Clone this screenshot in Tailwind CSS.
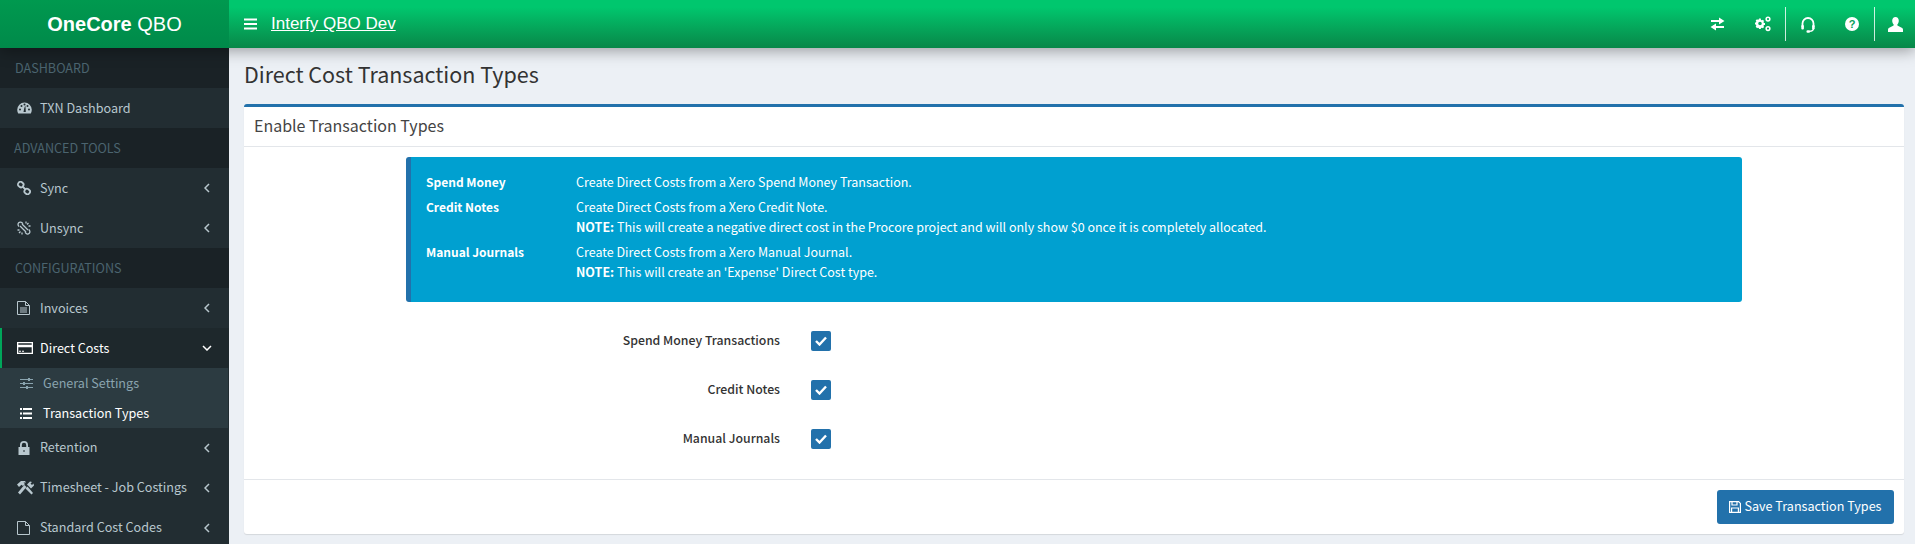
<!DOCTYPE html>
<html lang="en">
<head>
  <meta charset="UTF-8">
  <title>OneCore QBO - Transaction Types</title>
  <script src="https://cdn.jsdelivr.net/npm/@tailwindcss/browser@4"></script>
</head>
<body class="h-[544px] w-[1915px] overflow-hidden bg-[#ecf0f5] font-['Noto_Sans_CJK_SC','Noto_Sans',sans-serif] text-[12.6px] text-[#333]">
  <!-- Header -->
  <header class="relative z-10 flex h-12 bg-gradient-to-b from-[#00c76e] from-15% to-[#078748] text-white shadow-[0_3px_14px_rgba(0,0,0,0.35)]">
    <a class="flex w-[229px] items-center justify-center bg-gradient-to-b from-[#00994f] to-[#008a4a] font-['Liberation_Sans',sans-serif] text-[20px]"><b>OneCore</b>&nbsp;QBO</a>
    <div class="flex flex-1 items-center">
      <svg class="ml-[15px] h-[14px] w-[13px]" viewBox="0 0 13 14" fill="#fff"><rect y="1.500" width="13" height="2"/><rect y="6" width="13" height="2"/><rect y="10.500" width="13" height="2"/></svg>
      <a class="ml-[14px] font-['Liberation_Sans',sans-serif] text-[17px] underline">Interfy QBO Dev</a>
    </div>
    <div class="flex items-center">
      <div class="flex h-12 w-[44px] items-center justify-center pr-[3px]">
        <svg class="h-[14px] w-[15px]" viewBox="0 0 15 14" fill="#fff"><path d="M1 3h8V0.500L14.500 4 9 7.500V5H1zM14 9H6V6.500L0.500 10 6 13.500V11h8z"/></svg>
      </div>
      <div class="flex h-12 w-[44px] items-center justify-center">
        <svg class="h-[16px] w-[16px]" viewBox="0 0 16 15" fill="#fff"><path fill-rule="evenodd" d="M6 3.500l1 .3.8-.6 1.300 1.300-.6.9.4 1 1.100.2v1.800l-1.100.2-.4 1 .6.9-1.300 1.300-.8-.6-1 .4-.2 1H4l-.2-1-1-.4-.8.6L.7 10l.6-.9-.4-1L0 7.900V6.100l.9-.2.4-1-.6-.9L2 2.700l.8.6 1-.3.200-1h1.800zM5 5.200a1.800 1.800 0 100 3.600 1.800 1.800 0 000-3.600z"/><path fill-rule="evenodd" d="M13 0a2.600 2.600 0 110 5.200A2.600 2.600 0 0113 0zm0 1.500a1.100 1.100 0 100 2.200 1.100 1.100 0 000-2.200zM13 9.500a2.600 2.600 0 110 5.200 2.600 2.600 0 010-5.200zm0 1.500a1.100 1.100 0 100 2.200 1.100 1.100 0 000-2.200z"/></svg>
      </div>
      <div class="h-[34px] w-px bg-white/80"></div>
      <div class="flex h-12 w-[44px] items-center justify-center">
        <svg class="mt-[2px] h-[16px] w-[14px]" viewBox="0 0 14 16" fill="none" stroke="#fff" stroke-width="1.800"><path d="M1.500 10V6.500a5.500 5.500 0 0111 0V10"/><path d="M12.500 11c0 2-1.500 3.300-4 3.300" stroke-width="1.400"/><rect x="0.300" y="8" width="2.600" height="4.500" rx="1" fill="#fff" stroke="none"/><rect x="11.100" y="8" width="2.600" height="4.500" rx="1" fill="#fff" stroke="none"/><rect x="5.500" y="13.300" width="3.500" height="2.400" rx="1" fill="#fff" stroke="none"/></svg>
      </div>
      <div class="flex h-12 w-[44px] items-center justify-center">
        <span class="flex h-[14px] w-[14px] items-center justify-center rounded-full bg-white font-['Liberation_Sans',sans-serif] text-[11px] font-bold leading-none text-[#06a05a]">?</span>
      </div>
      <div class="h-[34px] w-px bg-white/80"></div>
      <div class="flex h-12 w-[40px] items-center justify-center">
        <svg class="h-[15px] w-[15px]" viewBox="0 0 15 15" fill="#fff"><path d="M7.500 0C5.500 0 4.200 1.500 4.200 3.700c0 1.500.6 2.800 1.400 3.600v1.300L.8 11C.2 11.400 0 12 0 12.800V15h15v-2.200c0-.8-.2-1.400-.8-1.800L9.400 8.600V7.300c.8-.8 1.400-2.100 1.400-3.600C10.800 1.500 9.500 0 7.500 0z"/></svg>
      </div>
    </div>
  </header>

  <div class="flex h-[496px]">
    <!-- Sidebar -->
    <aside class="w-[229px] shrink-0 overflow-hidden bg-[#222d32] leading-5 text-[#b8c7ce]">
      <div class="flex h-10 items-center bg-[#1a2226] pb-px pl-[15px] text-[#4b646f]">DASHBOARD</div>
      <a class="flex h-10 items-center pl-[17px]">
        <svg class="h-[14px] w-[15px]" viewBox="0 0 15 14" fill="#b8c7ce"><path fill-rule="evenodd" d="M7.500 1.500a7.300 7.300 0 00-7.300 7.300c0 1.400.4 2.700 1 3.700h12.600c.6-1 1-2.300 1-3.700a7.300 7.300 0 00-7.300-7.300zM3 9.500a1 1 0 110-2 1 1 0 010 2zm1.500-3.600a1 1 0 110-2 1 1 0 010 2zm3-1.400a1 1 0 110-2 1 1 0 010 2zM8.800 11H6.500l.8-4 1-2.500.3 2.600zM12 9.500a1 1 0 110-2 1 1 0 010 2zm-1.500-3.600a1 1 0 110-2 1 1 0 010 2z"/></svg>
        <span class="mb-px ml-2">TXN Dashboard</span>
      </a>
      <div class="flex h-10 items-center bg-[#1a2226] pb-px pl-[14px] text-[#4b646f]">ADVANCED TOOLS</div>
      <a class="flex h-10 items-center pl-[17px]">
        <svg class="h-[14px] w-[14px]" viewBox="0 0 14 14" fill="none" stroke="#b8c7ce" stroke-width="1.800"><rect x="1" y="1" width="5.500" height="5" rx="2.200" transform="rotate(40 3.700 3.500)"/><rect x="7.500" y="8" width="5.500" height="5" rx="2.200" transform="rotate(40 10.200 10.500)"/><path d="M5.500 5.500l3 3"/></svg>
        <span class="mb-px ml-[9px]">Sync</span>
        <svg class="ml-auto mr-[19px] h-[10px] w-[6px]" viewBox="0 0 6 10" fill="none" stroke="#b8c7ce" stroke-width="1.500"><path d="M5 1L1 5l4 4"/></svg>
      </a>
      <a class="flex h-10 items-center pl-[17px]">
        <svg class="h-[14px] w-[14px]" viewBox="0 0 14 14" fill="none" stroke="#b8c7ce" stroke-width="1.300"><path d="M2 5.500C.5 4 1 2.500 1.700 1.800S4 .7 5 1.700l1 1M8 11.300l1 1c1 1 2.500.7 3.300 0s1-2.300-.5-3.800M3 5l6 6M5 3l6 6M9 .5v2M13.500 5h-2M11.500 2l-1.500 1.500M.5 9h2M5 13.500v-2M2 12l1.500-1.500"/></svg>
        <span class="mb-px ml-[9px]">Unsync</span>
        <svg class="ml-auto mr-[19px] h-[10px] w-[6px]" viewBox="0 0 6 10" fill="none" stroke="#b8c7ce" stroke-width="1.500"><path d="M5 1L1 5l4 4"/></svg>
      </a>
      <div class="flex h-10 items-center bg-[#1a2226] pb-px pl-[15px] text-[#4b646f]">CONFIGURATIONS</div>
      <a class="flex h-10 items-center pl-[17px]">
        <svg class="h-[14px] w-[13px]" viewBox="0 0 13 14" fill="none" stroke="#b8c7ce"><path d="M.5.500h8l4 4v9H.5z"/><path d="M8.500.500v4h4M3 7h7M3 9h7M3 11h7"/></svg>
        <span class="mb-px ml-[10px]">Invoices</span>
        <svg class="ml-auto mr-[19px] h-[10px] w-[6px]" viewBox="0 0 6 10" fill="none" stroke="#b8c7ce" stroke-width="1.500"><path d="M5 1L1 5l4 4"/></svg>
      </a>
      <a class="flex h-10 items-center border-l-2 border-[#00a65a] bg-[#1e282c] pl-[15px] text-white">
        <svg class="h-3 w-4" viewBox="0 0 16 12" fill="#fff"><path fill-rule="evenodd" d="M0 0h16v12H0zm1.300 1.300v1.400h13.400V1.300zm0 4v5.400h13.400V5.300zM2 8.800h2v1H2zm3 0h2v1H5z"/></svg>
        <span class="mb-px ml-[7px]">Direct Costs</span>
        <svg class="ml-auto mr-[17px] h-[6px] w-[10px]" viewBox="0 0 10 6" fill="none" stroke="#fff" stroke-width="1.500"><path d="M1 1l4 4 4-4"/></svg>
      </a>
      <ul class="mr-px bg-[#2c3b41]">
        <li class="flex h-[30px] items-center pl-5 text-[#8aa4af]">
          <svg class="h-[11px] w-[13px]" viewBox="0 0 13 11" fill="#8aa4af"><path d="M0 1h13v1H0zM0 5h13v1H0zM0 9h13v1H0z"/><rect x="8" y="0" width="2" height="3"/><rect x="3" y="4" width="2" height="3"/><rect x="6" y="8" width="2" height="3"/></svg>
          <span class="mb-px ml-[10px]">General Settings</span>
        </li>
        <li class="flex h-[30px] items-center pl-5 text-white">
          <svg class="h-[11px] w-[12px]" viewBox="0 0 12 11" fill="#fff"><path d="M0 0h2v2H0zM3 0h9v2H3zM0 4.500h2v2H0zM3 4.500h9v2H3zM0 9h2v2H0zM3 9h9v2H3z"/></svg>
          <span class="mb-px ml-[11px]">Transaction Types</span>
        </li>
      </ul>
      <a class="flex h-10 items-center pl-[17px]">
        <svg class="h-[14px] w-[14px]" viewBox="0 0 14 14" fill="#b8c7ce"><path fill-rule="evenodd" d="M3 6V4a4 4 0 018 0v2h1.500v8h-11V6zm1.800 0h4.400V4a2.200 2.200 0 00-4.400 0zM6.500 9v2h1V9z"/></svg>
        <span class="mb-[2px] ml-[9px]">Retention</span>
        <svg class="ml-auto mr-[19px] h-[10px] w-[6px]" viewBox="0 0 6 10" fill="none" stroke="#b8c7ce" stroke-width="1.500"><path d="M5 1L1 5l4 4"/></svg>
      </a>
      <a class="flex h-10 items-center pl-[17px]">
        <svg class="h-[14px] w-[18px] shrink-0" viewBox="0 0 18 14" fill="#b8c7ce"><path d="M0 3.500L4 0h4l1 1.500H6.500L8 3 6 5 4.500 3.800 2 6zM5.500 6L7.500 4l2 2L3 13.500 1 11.500zM8.500 7.500L10.500 5.500 16 12l-1.500 1.500zM10 3.500l3-3 2 .5-1.500 1.500 1.500 1.500 1.500-1.500.5 2-3 3z"/></svg>
        <span class="mb-[2px] ml-[5px]">Timesheet - Job Costings</span>
        <svg class="ml-auto mr-[19px] h-[10px] w-[6px]" viewBox="0 0 6 10" fill="none" stroke="#b8c7ce" stroke-width="1.500"><path d="M5 1L1 5l4 4"/></svg>
      </a>
      <a class="flex h-10 items-center pl-[17px]">
        <svg class="h-[14px] w-[13px]" viewBox="0 0 13 14" fill="none" stroke="#b8c7ce"><path d="M.5.500h8l4 4v9H.5zM8.500.500v4h4"/></svg>
        <span class="mb-[2px] ml-[10px]">Standard Cost Codes</span>
        <svg class="ml-auto mr-[19px] h-[10px] w-[6px]" viewBox="0 0 6 10" fill="none" stroke="#b8c7ce" stroke-width="1.500"><path d="M5 1L1 5l4 4"/></svg>
      </a>
    </aside>

    <!-- Main -->
    <main class="flex-1 px-[15px] pr-[11px]">
      <h1 class="h-14 pt-[11px] text-[21.5px] leading-[30px] text-[#333]">Direct Cost Transaction Types</h1>
      <section class="rounded-[3px] border-t-[3px] border-[#2271ab] bg-white shadow-[0_1px_1px_rgba(0,0,0,0.1)]">
        <h2 class="flex h-10 items-center border-b border-[#e3e6ea] pb-[3px] pl-[10px] text-[16px] leading-5 text-[#444]">Enable Transaction Types</h2>
        <div class="h-[332px] pt-[10px]">
          <div class="ml-[162px] h-[145px] w-[1336px] rounded-[3px] border-l-[5px] border-[#2271ab] bg-[#00a0d0] pl-[15px] pt-[15px] text-[12.5px] leading-5 text-white">
            <dl class="grid grid-cols-[150px_1fr] gap-y-[5px]">
              <dt class="text-[12px] font-bold">Spend Money</dt>
              <dd>Create Direct Costs from a Xero Spend Money Transaction.</dd>
              <dt class="text-[12px] font-bold">Credit Notes</dt>
              <dd>Create Direct Costs from a Xero Credit Note.<br><b>NOTE:</b> This will create a negative direct cost in the Procore project and will only show $0 once it is completely allocated.</dd>
              <dt class="text-[12px] font-bold">Manual Journals</dt>
              <dd>Create Direct Costs from a Xero Manual Journal.<br><b>NOTE:</b> This will create an 'Expense' Direct Cost type.</dd>
            </dl>
          </div>
          <div class="mt-[29px] flex flex-col gap-[29px] pl-[166px] text-[12.3px] leading-5">
            <label class="flex h-5 items-center"><span class="mb-[2px] w-[370px] text-right font-medium">Spend Money Transactions</span><span class="ml-[31px] flex h-5 w-5 items-center justify-center rounded-[2px] bg-[#2271ab]"><svg class="h-[10px] w-3" viewBox="0 0 12 10" fill="none" stroke="#fff" stroke-width="2.400"><path d="M1 5l3.500 3.500L11 1.500"/></svg></span></label>
            <label class="flex h-5 items-center"><span class="mb-[2px] w-[370px] text-right font-medium">Credit Notes</span><span class="ml-[31px] flex h-5 w-5 items-center justify-center rounded-[2px] bg-[#2271ab]"><svg class="h-[10px] w-3" viewBox="0 0 12 10" fill="none" stroke="#fff" stroke-width="2.400"><path d="M1 5l3.500 3.500L11 1.500"/></svg></span></label>
            <label class="flex h-5 items-center"><span class="mb-[2px] w-[370px] text-right font-medium">Manual Journals</span><span class="ml-[31px] flex h-5 w-5 items-center justify-center rounded-[2px] bg-[#2271ab]"><svg class="h-[10px] w-3" viewBox="0 0 12 10" fill="none" stroke="#fff" stroke-width="2.400"><path d="M1 5l3.500 3.500L11 1.500"/></svg></span></label>
          </div>
        </div>
        <div class="flex h-[55px] items-center justify-end border-t border-[#e3e6ea] pr-[10px]">
          <button class="flex h-[34px] w-[177px] items-center justify-center rounded-[3px] bg-[#2271ab] leading-5 text-white">
            <svg class="mr-[3px] h-[12px] w-[12px]" viewBox="0 0 12 12" fill="none" stroke="#fff" stroke-width="1.200"><path d="M.6.600h9l1.800 1.800v9H.6z"/><path d="M3 .6v3.400h5V.6M2.600 11.400V7h6.800v4.400"/></svg>
            <span class="mb-[2px]">Save Transaction Types</span>
          </button>
        </div>
      </section>
    </main>
  </div>
</body>
</html>
